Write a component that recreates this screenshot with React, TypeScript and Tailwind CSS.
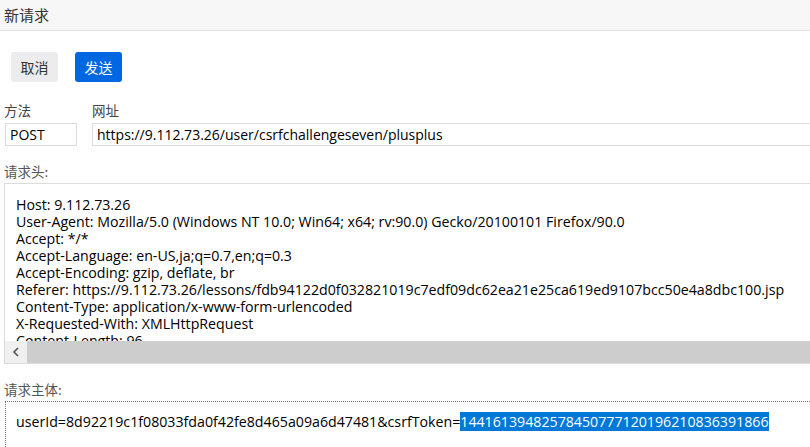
import React from "react";

const headerLines = [
  "Host: 9.112.73.26",
  "User-Agent: Mozilla/5.0 (Windows NT 10.0; Win64; x64; rv:90.0) Gecko/20100101 Firefox/90.0",
  "Accept: */*",
  "Accept-Language: en-US,ja;q=0.7,en;q=0.3",
  "Accept-Encoding: gzip, deflate, br",
  "Referer: https://9.112.73.26/lessons/fdb94122d0f032821019c7edf09dc62ea21e25ca619ed9107bcc50e4a8dbc100.jsp",
  "Content-Type: application/x-www-form-urlencoded",
  "X-Requested-With: XMLHttpRequest",
  "Content-Length: 96",
];

const latin = { fontFamily: '"Open Sans", "Noto Sans CJK SC", sans-serif' };
const cjk = { fontFamily: '"Noto Sans CJK SC", "Open Sans", sans-serif' };

export default function App() {
  return (
    <div className="w-[810px] h-[447px] overflow-hidden bg-white flex flex-col" style={cjk}>
      <div className="h-[31px] shrink-0 bg-[#f7f7f7] border-b border-[#e1e1e1] flex items-center px-[4px] text-[15px] text-[#333]">
        新请求
      </div>

      <div className="flex gap-[17px] pl-[11px] mt-[21px]">
        <button className="w-[47px] h-[30px] rounded-[3px] bg-[#ececee] text-[14px] text-[#333] flex items-center justify-center">
          取消
        </button>
        <button className="w-[47px] h-[30px] rounded-[3px] bg-[#0067e3] text-[14px] text-white flex items-center justify-center">
          发送
        </button>
      </div>

      <div className="flex mt-[19px] pl-[4px]">
        <div className="flex flex-col w-[88px] shrink-0">
          <div className="h-[22px] text-[13.5px] text-[#444] leading-[18px]">方法</div>
          <div className="ml-[1px] w-[72px] h-[23px] border border-[#dcdcdc] flex items-center pl-[4px] text-[14px] text-black" style={latin}>
            POST
          </div>
        </div>
        <div className="flex flex-col flex-1">
          <div className="h-[22px] text-[13.5px] text-[#444] leading-[18px]">网址</div>
          <div className="w-[740px] h-[23px] border border-[#dcdcdc] flex items-center pl-[4px] text-[14px] text-black whitespace-nowrap" style={latin}>
            https://9.112.73.26/user/csrfchallengeseven/plusplus
          </div>
        </div>
      </div>

      <div className="mt-[17px] pl-[4px] text-[13.5px] text-[#555] h-[20px] leading-[16px]">请求头:</div>

      <div className="ml-[4px] w-[820px] h-[181px] border border-[#dcdcdc] flex flex-col shrink-0">
        <div className="flex-1 overflow-hidden pl-[11px] pt-[12px] text-[14.2px] leading-[17px] text-black whitespace-pre" style={latin}>
          {headerLines.map((l) => (
            <div key={l}>{l}</div>
          ))}
        </div>
        <div className="h-[22px] shrink-0 flex">
          <div className="w-[22px] bg-[#f0f0f0] flex items-center justify-center">
            <svg width="8" height="10" viewBox="0 0 8 10">
              <path d="M6 1 L2 5 L6 9" stroke="#505050" strokeWidth="1.6" fill="none" />
            </svg>
          </div>
          <div className="flex-1 bg-[#cdcdcd]" />
        </div>
      </div>

      <div className="mt-[17px] pl-[4px] text-[13.5px] text-[#555] h-[20px] leading-[16px]">请求主体:</div>

      <div className="ml-[5px] flex-1 border-t border-l border-dotted border-[#777] pl-[10px] pt-[9px] text-[14.2px] text-black whitespace-nowrap" style={latin}>
        userId=8d92219c1f08033fda0f42fe8d465a09a6d47481&amp;csrfToken=
        <span className="bg-[#0078d7] text-white">14416139482578450777120196210836391866</span>
      </div>
    </div>
  );
}
